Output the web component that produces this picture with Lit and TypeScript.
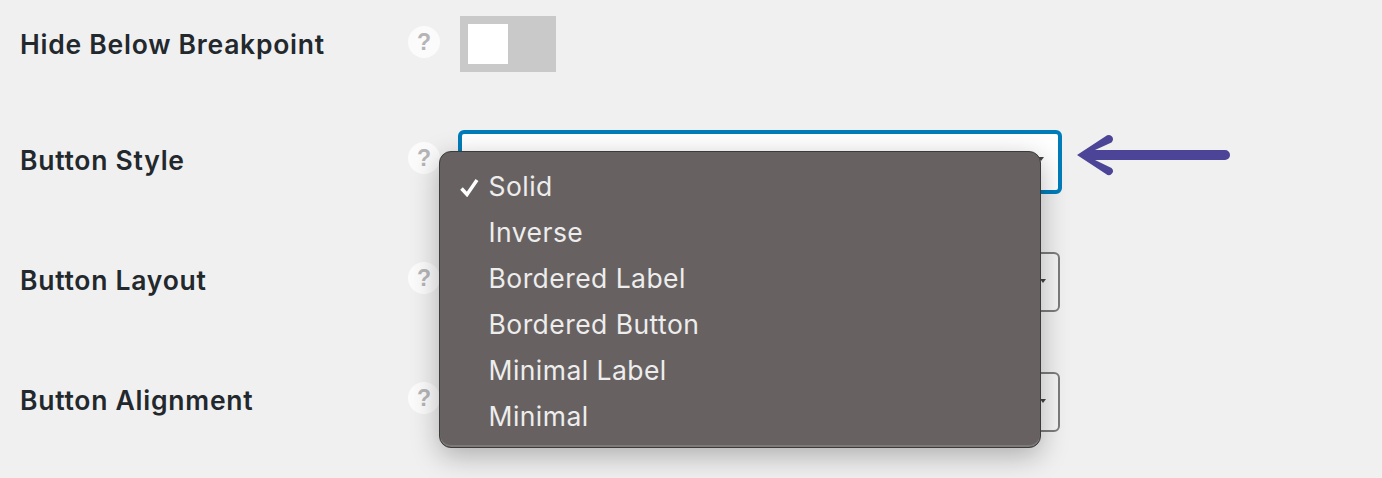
import { LitElement, html, css } from "lit";
import { customElement } from "lit/decorators.js";

const rows = [
  { label: "Button Layout", cls: "r3" },
  { label: "Button Alignment", cls: "r4" },
];
const items = ["Solid", "Inverse", "Bordered Label", "Bordered Button", "Minimal Label", "Minimal"];

@customElement("app-root")
export class AppRoot extends LitElement {
  static styles = css`
    :host { display: block; position: relative; width: 1382px; height: 478px; overflow: hidden; background: #f0f0f1; font-family: Inter, sans-serif; color: #23282d; }
    .page { display: flex; flex-direction: column; padding: 16px 0 0 20px; }
    .row { display: grid; grid-template-columns: 388px 52px 1fr; align-items: center; }
    .r1 { height: 56px; margin-bottom: 58px; }
    .r2 { height: 64px; margin-bottom: 58px; }
    .r3, .r4 { height: 60px; }
    .r3 { margin-bottom: 60px; }
    .label { font-size: 26.5px; font-weight: 600; line-height: 32px; letter-spacing: 0.75px; white-space: nowrap; }
    .r2 .label, .r3 .label, .r4 .label { margin-top: -4px; }
    .help { width: 32px; height: 32px; border-radius: 50%; background: #fbfbfb; color: #b5b5b7; font: 700 23px/32px "Liberation Sans", sans-serif; text-align: center; margin-top: -4px; }
    .r2 .help, .r3 .help, .r4 .help { margin-top: -8px; }
    .toggle { width: 96px; height: 56px; box-sizing: border-box; padding: 8px; background: #c9c9c9; }
    .knob { width: 40px; height: 40px; background: #fff; }
    .select { width: 600px; height: 100%; box-sizing: border-box; background: #f5f5f6; border: 2px solid #7c7c7c; border-radius: 6px; position: relative; }
    .r2 .select { width: 604px; margin-left: -2px; background: #fff; border: 4px solid #007cba; }
    .caret { position: absolute; right: 12px; top: 25px; width: 0; height: 0; border-left: 3px solid transparent; border-right: 3px solid transparent; border-top: 4px solid #444; }
    .r2 .caret { top: 23px; right: 14px; }
    .arrow { position: absolute; left: 1076px; top: 134px; width: 156px; height: 42px; }
    .menu { position: absolute; left: 439px; top: 151px; width: 602px; height: 297px; box-sizing: border-box; padding: 11px 0; background: #676261; border: 1px solid #3c3b3b; border-radius: 12px; box-shadow: inset 0 -2px 0 #7d7978, 0 8px 28px rgba(0,0,0,.28); color: #eeeded; font: 400 26.5px/46px Inter, Roboto, sans-serif; letter-spacing: 0.45px; }
    .item { display: flex; align-items: center; height: 46px; padding-left: 48.5px; position: relative; }
    .check { position: absolute; left: 20px; top: 15px; width: 19px; height: 19px; }
  `;

  help() { return html`<div class="help">?</div>`; }

  render() {
    return html`
      <div class="page">
        <div class="row r1">
          <div class="label">Hide Below Breakpoint</div>
          ${this.help()}
          <div class="toggle"><div class="knob"></div></div>
        </div>
        <div class="row r2">
          <div class="label">Button Style</div>
          ${this.help()}
          <div class="select"><span class="caret"></span></div>
        </div>
        ${rows.map((r) => html`
          <div class="row ${r.cls}">
            <div class="label">${r.label}</div>
            ${this.help()}
            <div class="select"><span class="caret"></span></div>
          </div>`)}
      </div>
      <svg class="arrow" viewBox="0 0 156 42">
        <path fill="#4c4496" d="M1 21 L30 2 A4 4 0 0 1 35.5 8.5 L19 16 H149 A5 5 0 0 1 149 26 H19 L35.5 34 A4 4 0 0 1 30 40 Z"/>
      </svg>
      <div class="menu">
        ${items.map((t, i) => html`<div class="item">
          ${i === 0 ? html`<svg class="check" viewBox="0 0 19 19" fill="none"><path d="M1.5 10.5 7 16.5 17 2" stroke="#fff" stroke-width="3.5"/></svg>` : ""}
          ${t}</div>`)}
      </div>
    `;
  }
}
